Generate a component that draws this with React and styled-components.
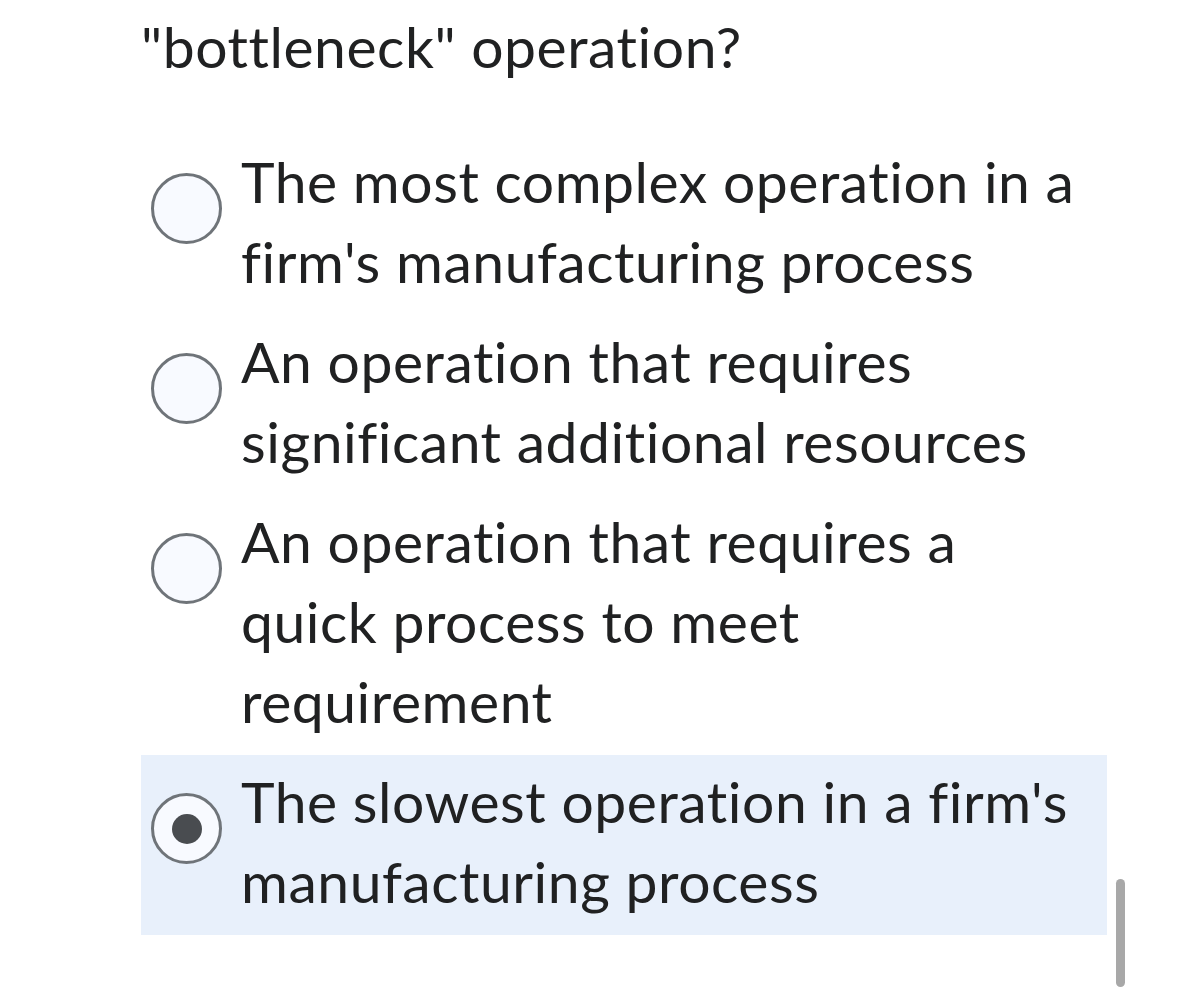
import React from "react";
import styled, { createGlobalStyle } from "styled-components";

const GlobalStyle = createGlobalStyle`
  html, body {
    margin: 0;
    padding: 0;
    background: #ffffff;
    overflow: hidden;
  }
  body {
    font-family: Lato, "Noto Sans", sans-serif;
    color: #202122;
    font-variant-ligatures: none;
    font-feature-settings: "liga" 0, "clig" 0;
  }
`;

const Page = styled.div`
  position: relative;
  width: 1179px;
  height: 995px;
  box-sizing: border-box;
  padding: 6px 0 0 141px;
`;

const Question = styled.div`
  width: 966px;
  font-size: 57px;
  line-height: 80px;
  letter-spacing: 0.55px;
  color: #202122;
  margin: 0 0 49px 0;
`;

const Options = styled.div`
  width: 966px;
  display: flex;
  flex-direction: column;
`;

const Option = styled.label`
  display: flex;
  align-items: flex-start;
  gap: 19px;
  padding: 6px 17px 14px 10px;
  background: ${(p) => (p.$selected ? "#e8f0fb" : "transparent")};
  cursor: pointer;
`;

const Radio = styled.span`
  flex: 0 0 auto;
  width: 71px;
  height: 71px;
  margin-top: 32px;
  box-sizing: border-box;
  border-radius: 50%;
  border: 3px solid #6f7479;
  background: #f8faff;
  display: flex;
  align-items: center;
  justify-content: center;
`;

const Dot = styled.span`
  width: 30px;
  height: 30px;
  border-radius: 50%;
  background: #494c50;
`;

const Label = styled.span`
  flex: 1 1 auto;
  font-size: 57px;
  line-height: 80px;
  letter-spacing: 0.55px;
  color: #202122;
`;

const Scrollbar = styled.div`
  position: absolute;
  left: 1116px;
  top: 879px;
  width: 9px;
  height: 108px;
  border-radius: 5px;
  background: #a8a8a8;
`;

const options = [
  "The most complex operation in a firm's manufacturing process",
  "An operation that requires significant additional resources",
  "An operation that requires a quick process to meet requirement",
  "The slowest operation in a firm's manufacturing process",
];

export default function App() {
  const selected = 3;
  return (
    <>
      <GlobalStyle />
      <Page>
        <Question>"bottleneck" operation?</Question>
        <Options>
          {options.map((text, i) => (
            <Option key={i} $selected={i === selected}>
              <Radio>{i === selected && <Dot />}</Radio>
              <Label>{text}</Label>
            </Option>
          ))}
        </Options>
        <Scrollbar />
      </Page>
    </>
  );
}
